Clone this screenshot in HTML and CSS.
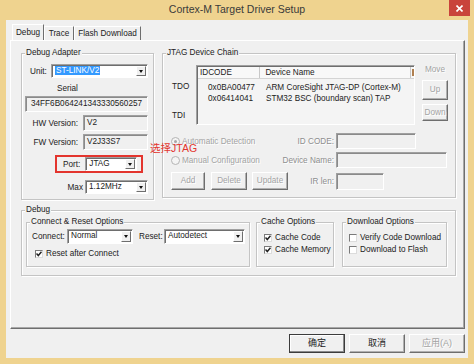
FILE: index.html
```html
<!DOCTYPE html>
<html lang="en">
<head>
    <meta charset="UTF-8">
    <title>Cortex-M Target Driver Setup</title>
    <link rel="stylesheet" href="styles.css">
</head>
<body>
    <div class="window">
        <div class="titlebar">
            <div class="title">Cortex-M Target Driver Setup</div>
            <div class="close">
                <svg width="7" height="7" viewBox="0 0 7 7"><path d="M0.5 0.5L6.5 6.5M6.5 0.5L0.5 6.5" stroke="#fff" stroke-width="1.6"/></svg>
            </div>
        </div>

        <div class="client">
            <div class="tabs">
                <div class="tab active tab-debug">Debug</div>
                <div class="tab tab-trace">Trace</div>
                <div class="tab tab-flash">Flash Download</div>
            </div>

            <div class="panel">
                <div class="top-row">
                    <!-- Debug Adapter -->
                    <div class="group adapter">
                        <div class="legend">Debug Adapter</div>
                        <div class="row unit-row">
                            <span class="unit-label">Unit:</span>
                            <div class="select unit-select">
                                <span class="value"><span class="picked">ST-LINK/V2</span></span>
                                <span class="drop"></span>
                            </div>
                        </div>
                        <div class="serial-label">Serial</div>
                        <div class="edit serial-box">34FF6B064241343330560257</div>
                        <div class="row version-row">
                            <span class="ver-label">HW Version:</span>
                            <div class="edit ver-box">V2</div>
                        </div>
                        <div class="row version-row">
                            <span class="ver-label">FW Version:</span>
                            <div class="edit ver-box">V2J33S7</div>
                        </div>
                        <div class="row port-row">
                            <span>Port:</span>
                            <div class="select port-select">
                                <span class="value">JTAG</span>
                                <span class="drop"></span>
                            </div>
                        </div>
                        <div class="row max-row">
                            <span class="max-label">Max</span>
                            <div class="select max-select">
                                <span class="value">1.12MHz</span>
                                <span class="drop"></span>
                            </div>
                        </div>
                    </div>

                    <!-- JTAG Device Chain -->
                    <div class="group jtag">
                        <div class="legend">JTAG Device Chain</div>
                        <div class="chain">
                            <div class="tdx">
                                <span class="tdo">TDO</span>
                                <span class="tdi">TDI</span>
                            </div>
                            <div class="list">
                                <div class="list-head">
                                    <span class="col-id">IDCODE</span>
                                    <span class="col-name">Device Name</span>
                                    <span class="col-more"></span>
                                </div>
                                <div class="list-row first">
                                    <span class="col-id">0x0BA00477</span>
                                    <span class="col-name">ARM CoreSight JTAG-DP (Cortex-M)</span>
                                </div>
                                <div class="list-row">
                                    <span class="col-id">0x06414041</span>
                                    <span class="col-name">STM32 BSC (boundary scan) TAP</span>
                                </div>
                            </div>
                            <div class="move-col">
                                <span class="dim move-label">Move</span>
                                <div class="btn dim up-btn">Up</div>
                                <div class="btn dim down-btn">Down</div>
                            </div>
                        </div>

                        <div class="detect-row row-a">
                            <div class="detect-left"><span class="radio on"></span><span class="dim">Automatic Detection</span></div>
                            <span class="field-label">ID CODE:</span>
                            <div class="slot"><div class="edit id-box"></div></div>
                        </div>
                        <div class="detect-row row-b">
                            <div class="detect-left"><span class="radio"></span><span class="dim">Manual Configuration</span></div>
                            <span class="field-label">Device Name:</span>
                            <div class="slot"><div class="edit name-box"></div></div>
                        </div>
                        <div class="detect-row row-c">
                            <div class="detect-left">
                                <div class="btn dim add-btn">Add</div>
                                <div class="btn dim delete-btn">Delete</div>
                                <div class="btn dim update-btn">Update</div>
                            </div>
                            <span class="field-label">IR len:</span>
                            <div class="slot"><div class="edit ir-box"></div></div>
                        </div>
                    </div>
                </div>

                <!-- Debug -->
                <div class="group debug">
                    <div class="legend">Debug</div>
                    <div class="options">
                        <div class="group connect">
                            <div class="legend">Connect &amp; Reset Options</div>
                            <div class="row connect-row">
                                <span class="connect-label">Connect:</span>
                                <div class="select connect-select">
                                    <span class="value">Normal</span>
                                    <span class="drop"></span>
                                </div>
                                <span class="reset-label">Reset:</span>
                                <div class="select reset-select">
                                    <span class="value">Autodetect</span>
                                    <span class="drop"></span>
                                </div>
                            </div>
                            <div class="check-row reset-after">
                                <span class="check on"><svg width="6" height="6" viewBox="0 0 6 6"><path d="M0.5 2.5L2.3 4.5L5.5 0.8" fill="none" stroke="#222" stroke-width="1.5"/></svg></span>
                                Reset after Connect
                            </div>
                        </div>

                        <div class="group cache">
                            <div class="legend">Cache Options</div>
                            <div class="check-row cache-first">
                                <span class="check on"><svg width="6" height="6" viewBox="0 0 6 6"><path d="M0.5 2.5L2.3 4.5L5.5 0.8" fill="none" stroke="#222" stroke-width="1.5"/></svg></span>
                                Cache Code
                            </div>
                            <div class="check-row cache-row">
                                <span class="check on"><svg width="6" height="6" viewBox="0 0 6 6"><path d="M0.5 2.5L2.3 4.5L5.5 0.8" fill="none" stroke="#222" stroke-width="1.5"/></svg></span>
                                Cache Memory
                            </div>
                        </div>

                        <div class="group download">
                            <div class="legend">Download Options</div>
                            <div class="check-row download-first">
                                <span class="check"></span>
                                Verify Code Download
                            </div>
                            <div class="check-row download-row">
                                <span class="check"></span>
                                Download to Flash
                            </div>
                        </div>
                    </div>
                </div>

                <div class="note">选择JTAG</div>
            </div>

            <div class="actions">
                <div class="btn action default">确定</div>
                <div class="btn action">取消</div>
                <div class="btn action dim">应用(A)</div>
            </div>
        </div>
    </div>
</body>
</html>
```

FILE: styles.css
```css
* {
    box-sizing: border-box;
}
body {
    margin: 0;
    width: 474px;
    height: 364px;
    overflow: hidden;
    background-color: #efd38f;
    font-family: "Liberation Sans", "Noto Sans CJK SC", sans-serif;
    font-size: 8.2px;
    color: #222;
}
.window {
    height: 364px;
    display: flex;
    flex-direction: column;
}
.titlebar {
    height: 20px;
    display: grid;
    grid-template-columns: 1fr auto 1fr;
    align-items: start;
}
.title {
    grid-column: 2;
    font-size: 10.5px;
    line-height: 18px;
    color: #3a3a3a;
}
.close {
    grid-column: 3;
    justify-self: end;
    margin-right: 4px;
    width: 21px;
    height: 16px;
    background-color: #c9433b;
    display: flex;
    align-items: center;
    justify-content: center;
}
.client {
    margin: 0 6px 6px;
    height: 338px;
    background-color: #f0f0f0;
    padding: 4px 3px 0 4px;
}

/* tabs */
.tabs {
    display: flex;
    height: 14px;
    margin-top: 2px;
    padding-left: 2px;
}
.tab {
    height: 14px;
    line-height: 13px;
    text-align: center;
    border-top: 1px solid #fff;
    border-left: 1px solid #fff;
    border-right: 1px solid #6e6e6e;
}
.tab.active {
    margin-top: -2px;
    height: 16px;
    line-height: 16px;
}
.tab-debug { width: 32px; }
.tab-trace { width: 30px; }
.tab-flash { width: 67px; }

.panel {
    position: relative;
    width: 455px;
    height: 289px;
    border: 1px solid;
    border-color: #fff #6e6e6e #6e6e6e #fff;
    box-shadow: inset -1px -1px 0 #a8a8a8;
}

/* group frames */
.group {
    border: 1px solid #c4c4c4;
    box-shadow: inset 1px 1px 0 #fff, 1px 1px 0 #fff;
}
.legend {
    width: max-content;
    height: 10px;
    line-height: 10px;
    margin: -6px 0 0 3px;
    padding: 0 1px;
    background-color: #f0f0f0;
}
.row {
    display: flex;
    align-items: center;
}
.dim {
    color: #a3a3a3;
    text-shadow: 1px 1px 0 #fff;
}

/* edit boxes, selects, buttons */
.edit {
    height: 16px;
    line-height: 14px;
    padding-left: 5px;
    background-color: #f0f0f0;
    border: 1px solid;
    border-color: #a0a0a0 #fff #fff #a0a0a0;
    box-shadow: inset 1px 1px 0 #8a8a8a;
}
.select {
    display: flex;
    height: 14px;
    background-color: #fff;
    border: 1px solid;
    border-color: #a0a0a0 #fff #fff #a0a0a0;
    box-shadow: inset 1px 1px 0 #6e6e6e;
}
.select .value {
    flex: 1;
    line-height: 12px;
    padding-left: 3px;
}
.drop {
    width: 10px;
    margin: 1px 1px 1px 0;
    background-color: #f0f0f0;
    border: 1px solid;
    border-color: #fff #6e6e6e #6e6e6e #fff;
    display: flex;
    align-items: center;
    justify-content: center;
}
.drop::after {
    content: "";
    border-left: 2.5px solid transparent;
    border-right: 2.5px solid transparent;
    border-top: 3px solid #111;
}
.btn {
    text-align: center;
    background-color: #f0f0f0;
    border: 1px solid;
    border-color: #fff #6e6e6e #6e6e6e #fff;
    box-shadow: inset -1px -1px 0 #b0b0b0;
}

/* layout of the panel */
.top-row {
    display: flex;
    align-items: flex-start;
    margin-top: 12px;
    padding-left: 10px;
}
.adapter {
    width: 133px;
    height: 147px;
}
.unit-row {
    margin-top: 6px;
    padding-left: 8px;
}
.unit-label {
    width: 21px;
}
.unit-select {
    width: 97px;
}
.picked {
    background-color: #3399ff;
    color: #fff;
    padding: 0 1px;
}
.serial-label {
    margin: 6px 0 0 35px;
    line-height: 10px;
}
.serial-box {
    width: 123px;
    margin: 2px 0 0 3px;
}
.version-row {
    margin-top: 3px;
}
.ver-label {
    width: 56px;
    margin-right: 5px;
    text-align: right;
}
.ver-box {
    width: 65px;
    padding-left: 3px;
}
.port-row {
    width: 88px;
    height: 18px;
    margin: 5px 0 0 33px;
    padding-left: 6px;
    border: 2px solid #e3352e;
}
.port-select {
    width: 52px;
    margin-left: 5px;
}
.max-row {
    margin-top: 7px;
}
.max-label {
    width: 61px;
    margin-right: 2px;
    text-align: right;
}
.max-select {
    width: 63px;
}

.jtag {
    width: 294px;
    height: 145px;
    margin-left: 8px;
}
.chain {
    display: flex;
    align-items: flex-start;
    margin-top: 7px;
    padding-left: 9px;
}
.tdx {
    width: 24px;
    display: flex;
    flex-direction: column;
    line-height: 10px;
}
.tdo { margin-top: 17px; }
.tdi { margin-top: 19px; }
.list {
    width: 219px;
    height: 60px;
    overflow: hidden;
    background-color: #f4f4f4;
    border: 1px solid;
    border-color: #a0a0a0 #fff #fff #a0a0a0;
    box-shadow: inset 1px 1px 0 #6e6e6e;
}
.list-head {
    display: flex;
    height: 12px;
    line-height: 11px;
    margin-left: 1px;
    margin-top: 1px;
    border-bottom: 1px solid #d4d4d4;
    background-color: #f8f8f8;
}
.list-head .col-id {
    width: 63px;
    padding-left: 2px;
    border-right: 1px solid #c8c8c8;
}
.list-head .col-name {
    width: 152px;
    padding-left: 5px;
    border-right: 1px solid #c8c8c8;
}
.col-more {
    width: 2px;
    margin: 2px 0 2px 1px;
    background-color: #b08050;
}
.list-row {
    display: flex;
    line-height: 11px;
    margin-left: 1px;
}
.list-row.first {
    margin-top: 3px;
}
.list-row .col-id {
    width: 64px;
    padding-left: 10px;
}
.list-row .col-name {
    padding-left: 4px;
    white-space: nowrap;
}
.move-col {
    width: 26px;
    margin-left: 7px;
    display: flex;
    flex-direction: column;
}
.move-label {
    line-height: 10px;
    text-align: center;
}
.up-btn {
    height: 20px;
    line-height: 18px;
    margin-top: 5px;
}
.down-btn {
    height: 17px;
    line-height: 15px;
    margin-top: 4px;
}
.detect-row {
    display: flex;
    align-items: center;
    height: 16px;
    padding-left: 8px;
}
.row-a { margin-top: 8px; }
.row-b { margin-top: 3px; }
.row-c { margin-top: 4px; height: 18px; }
.detect-left {
    flex: 1;
    display: flex;
    align-items: center;
    height: 100%;
}
.radio {
    width: 9px;
    height: 9px;
    margin-right: 2px;
    border-radius: 50%;
    border: 1px solid #b4b4b4;
    background-color: #f4f4f4;
    display: flex;
    align-items: center;
    justify-content: center;
}
.radio.on::after {
    content: "";
    width: 3px;
    height: 3px;
    border-radius: 50%;
    background-color: #a8a8a8;
}
.field-label {
    margin-right: 2px;
    color: #8e8e8e;
    text-shadow: 1px 1px 0 #fff;
    white-space: nowrap;
}
.slot {
    width: 119px;
    display: flex;
}
.id-box { width: 80px; }
.name-box { width: 111px; }
.ir-box { width: 48px; height: 17px; }
.add-btn, .delete-btn, .update-btn {
    height: 18px;
    line-height: 16px;
}
.add-btn { width: 34px; }
.delete-btn { width: 36px; margin-left: 6px; }
.update-btn { width: 36px; margin-left: 5px; }

/* debug group */
.debug {
    width: 435px;
    height: 66px;
    margin: 10px 0 0 10px;
}
.options {
    display: flex;
    align-items: flex-start;
    margin-top: 7px;
    padding-left: 4px;
}
.connect {
    width: 224px;
    height: 45px;
}
.connect-row {
    height: 15px;
    margin-top: 2px;
    padding-left: 5px;
}
.connect-label {
    width: 35px;
}
.connect-select {
    width: 66px;
    height: 15px;
}
.reset-label {
    width: 25px;
    margin-left: 6px;
}
.reset-select {
    width: 81px;
    height: 15px;
}
.check-row {
    display: flex;
    align-items: center;
    line-height: 12px;
    white-space: nowrap;
}
.check {
    width: 8px;
    height: 8px;
    margin-right: 3px;
    background-color: #fff;
    border: 1px solid;
    border-color: #7a7a7a #dcdcdc #dcdcdc #7a7a7a;
    display: flex;
    align-items: center;
    justify-content: center;
}
.reset-after {
    margin-top: 4px;
    padding-left: 8px;
}
.cache {
    width: 78px;
    height: 45px;
    margin-left: 6px;
}
.cache-first {
    margin-top: 5px;
    padding-left: 7px;
}
.cache-row {
    padding-left: 7px;
}
.download {
    width: 105px;
    height: 45px;
    margin-left: 8px;
}
.download-first, .download-row {
    width: 101px;
    overflow: hidden;
    padding-left: 6px;
}
.download-first {
    margin-top: 5px;
}

/* red annotation drawn over the frames */
.note {
    position: absolute;
    left: 139px;
    top: 101px;
    font-size: 10.5px;
    line-height: 12px;
    color: #e3352e;
}

/* dialog buttons */
.actions {
    display: flex;
    justify-content: flex-end;
    gap: 4px;
    margin-top: 5px;
}
.action {
    width: 56px;
    height: 19px;
    line-height: 17px;
    font-size: 9px;
}
.action.default {
    border-color: #3c3c3c;
    box-shadow: inset -1px -1px 0 #8a8a8a, inset 1px 1px 0 #fff;
}
```
